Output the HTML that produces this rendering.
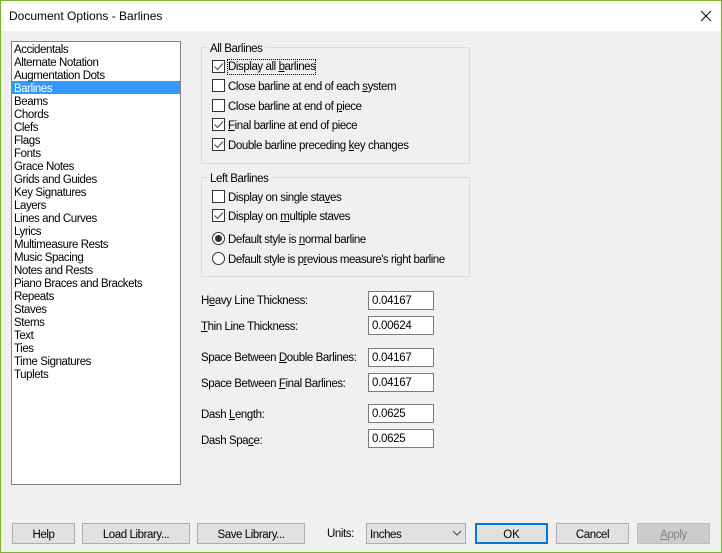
<!DOCTYPE html>
<html><head><meta charset="utf-8"><title>Document Options - Barlines</title>
<style>
html,body{margin:0;padding:0;width:722px;height:553px;overflow:hidden;background:#f0f0f0}
body{position:relative;font-family:"Liberation Sans",sans-serif;font-size:11.5px;color:#000;letter-spacing:-.42px}
#b{position:absolute;left:0;top:0;width:720px;height:551px;border:1px solid #7fb12f;z-index:9;pointer-events:none}
#t{position:absolute;left:1px;top:1px;width:720px;height:30px;background:#fff}
.a{position:absolute;white-space:nowrap;line-height:14px;margin-top:1px}
#list{position:absolute;left:11px;top:41px;width:168px;height:442px;background:#fff;border:1px solid #828282}
#list div{height:13px;line-height:17px;padding-left:2px;white-space:nowrap}
#list .s{background:#3399ff;color:#fff}
.g{position:absolute;left:201px;width:267px;border:1px solid #dcdcdc}
.c{position:absolute;left:212px;width:11px;height:11px;border:1px solid #333;background:#fff}
.c svg{position:absolute;left:0;top:0}
.r{position:absolute;left:212px}
.i{position:absolute;left:368px;width:61px;height:17px;background:#fff;border:1px solid #7a7a7a;padding-left:3px;line-height:19px;letter-spacing:-.3px}
.btn{position:absolute;top:523px;height:19px;border:1px solid #adadad;background:#e1e1e1;text-align:center;line-height:22px;letter-spacing:-.42px}
u{text-underline-offset:1px}
</style></head><body>
<div id="t"></div><div id="b"></div>
<div class="a" style="left:9px;top:9px;font-size:12px;letter-spacing:0;margin-top:0">Document Options - Barlines</div>
<svg class="a" style="left:700px;top:10px;margin-top:0" width="12" height="12"><path d="M1 1L11 11M11 1L1 11" stroke="#111" stroke-width="1.1" fill="none"/></svg>
<div id="list">
<div>Accidentals</div><div>Alternate Notation</div><div>Augmentation Dots</div><div class="s">Barlines</div><div>Beams</div><div>Chords</div><div>Clefs</div><div>Flags</div><div>Fonts</div><div>Grace Notes</div><div>Grids and Guides</div><div>Key Signatures</div><div>Layers</div><div>Lines and Curves</div><div>Lyrics</div><div>Multimeasure Rests</div><div>Music Spacing</div><div>Notes and Rests</div><div>Piano Braces and Brackets</div><div>Repeats</div><div>Staves</div><div>Stems</div><div>Text</div><div>Ties</div><div>Time Signatures</div><div>Tuplets</div>
</div>

<div class="g" style="top:47px;height:115px"></div>
<div class="a" style="left:207px;top:41px;background:#f0f0f0;padding:0 3px">All Barlines</div>
<div class="c" style="top:60px"><svg width="11" height="11"><path d="M1.5 5.5L4.5 8.5L10 2.5" stroke="#555" stroke-width="1.2" fill="none"/></svg></div>
<div class="a" style="left:228px;top:59px"><span style="outline:1px dotted #000;outline-offset:0;display:inline-block;line-height:14px">Display all <u>b</u>arlines</span></div>
<div class="c" style="top:79px"></div><div class="a" style="left:228px;top:79px">Close barline at end of each <u>s</u>ystem</div>
<div class="c" style="top:99px"></div><div class="a" style="left:228px;top:99px">Close barline at end of <u>p</u>iece</div>
<div class="c" style="top:118px"><svg width="11" height="11"><path d="M1.5 5.5L4.5 8.5L10 2.5" stroke="#555" stroke-width="1.2" fill="none"/></svg></div>
<div class="a" style="left:228px;top:118px"><u>F</u>inal barline at end of piece</div>
<div class="c" style="top:138px"><svg width="11" height="11"><path d="M1.5 5.5L4.5 8.5L10 2.5" stroke="#555" stroke-width="1.2" fill="none"/></svg></div>
<div class="a" style="left:228px;top:138px">Double barline preceding <u>k</u>ey changes</div>

<div class="g" style="top:177px;height:98px"></div>
<div class="a" style="left:207px;top:171px;background:#f0f0f0;padding:0 3px">Left Barlines</div>
<div class="c" style="top:190px"></div><div class="a" style="left:228px;top:190px">Display on single sta<u>v</u>es</div>
<div class="c" style="top:209px"><svg width="11" height="11"><path d="M1.5 5.5L4.5 8.5L10 2.5" stroke="#555" stroke-width="1.2" fill="none"/></svg></div>
<div class="a" style="left:228px;top:209px">Display on <u>m</u>ultiple staves</div>
<svg class="r" style="top:232px" width="13" height="13"><circle cx="6.5" cy="6.5" r="6" fill="#fff" stroke="#333"/><circle cx="6.5" cy="6.5" r="3.5" fill="#333"/></svg>
<div class="a" style="left:228px;top:232px">Default style is <u>n</u>ormal barline</div>
<svg class="r" style="top:252px" width="13" height="13"><circle cx="6.5" cy="6.5" r="6" fill="#fff" stroke="#333"/></svg>
<div class="a" style="left:228px;top:252px;letter-spacing:-.49px">Default style is p<u>r</u>evious measure's right barline</div>

<div class="a" style="left:201px;top:293px">H<u>e</u>avy Line Thickness:</div><div class="i" style="top:291px">0.04167</div>
<div class="a" style="left:201px;top:319px"><u>T</u>hin Line Thickness:</div><div class="i" style="top:316px">0.00624</div>
<div class="a" style="left:201px;top:350px">Space Between <u>D</u>ouble Barlines:</div><div class="i" style="top:348px">0.04167</div>
<div class="a" style="left:201px;top:376px">Space Between <u>F</u>inal Barlines:</div><div class="i" style="top:373px">0.04167</div>
<div class="a" style="left:201px;top:407px">Dash <u>L</u>ength:</div><div class="i" style="top:404px">0.0625</div>
<div class="a" style="left:201px;top:433px">Dash Spa<u>c</u>e:</div><div class="i" style="top:429px">0.0625</div>

<div class="btn" style="left:12px;width:61px">Help</div>
<div class="btn" style="left:82px;width:106px">Load Library...</div>
<div class="btn" style="left:197px;width:106px">Save Library...</div>
<div class="a" style="left:327px;top:526px">Units:</div>
<div class="btn" style="left:366px;width:95px;padding-left:3px;text-align:left">Inches</div>
<svg class="a" style="left:452px;top:530px;margin-top:0" width="10" height="6"><path d="M1 1L5 5L9 1" stroke="#444" fill="none"/></svg>
<div class="btn" style="left:475px;width:69px;height:17px;border:2px solid #0078d7;line-height:20px;letter-spacing:0">OK</div>
<div class="btn" style="left:556px;width:71px">Cancel</div>
<div class="btn" style="left:637px;width:71px;background:#cccccc;border-color:#bfbfbf;color:#838383"><u>A</u>pply</div>
</body></html>
